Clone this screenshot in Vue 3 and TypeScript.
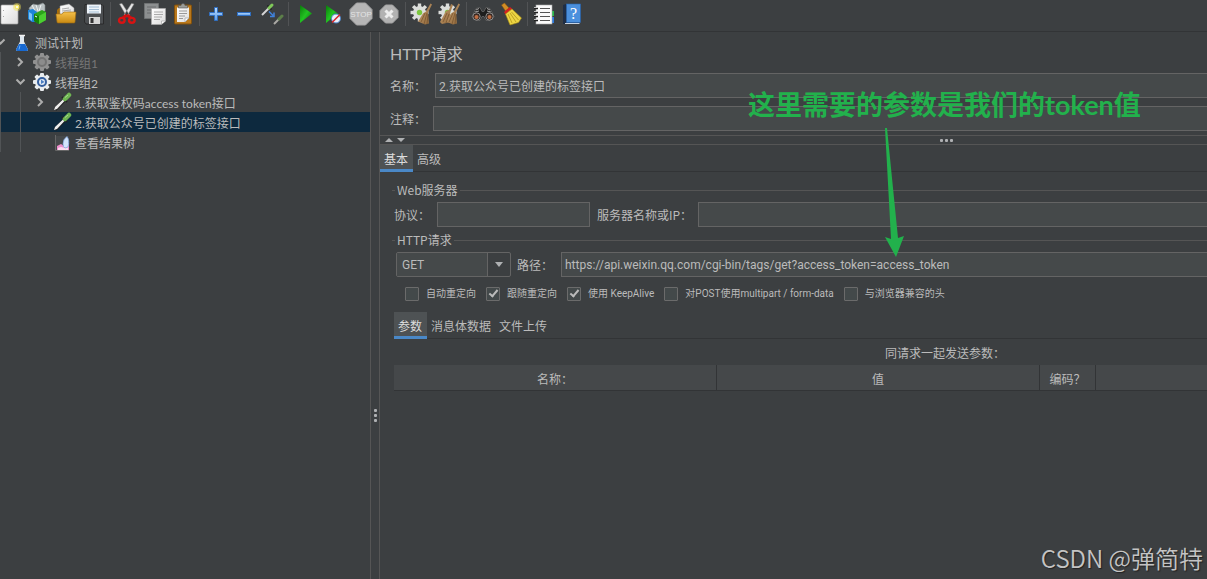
<script setup lang="ts">
import { ref } from 'vue'

type IconKind = 'flask' | 'gear' | 'gear-off' | 'sampler' | 'results'

interface TreeNode {
  id: number
  label: string
  level: number
  icon: IconKind
  expander?: 'open' | 'closed'
  disabled?: boolean
}

const nodes: TreeNode[] = [
  { id: 1, label: '测试计划', level: 0, icon: 'flask', expander: 'open' },
  { id: 2, label: '线程组1', level: 1, icon: 'gear-off', expander: 'closed', disabled: true },
  { id: 3, label: '线程组2', level: 1, icon: 'gear', expander: 'open' },
  { id: 4, label: '1.获取鉴权码access token接口', level: 2, icon: 'sampler', expander: 'closed' },
  { id: 5, label: '2.获取公众号已创建的标签接口', level: 2, icon: 'sampler' },
  { id: 6, label: '查看结果树', level: 2, icon: 'results' },
]

const toolGroups: string[][] = [
  ['new', 'templates', 'open', 'save'],
  ['cut', 'copy', 'paste'],
  ['expand', 'collapse', 'toggle'],
  ['start', 'start-no-pauses', 'stop', 'shutdown'],
  ['clear', 'clear-all'],
  ['search', 'reset-search'],
  ['functions', 'help'],
]

const selectedId = ref(5)
const name = ref('2.获取公众号已创建的标签接口')
const comment = ref('')
const protocol = ref('')
const server = ref('')
const method = ref('GET')
const path = ref('https://api.weixin.qq.com/cgi-bin/tags/get?access_token=access_token')

const mainTabs = ['基本', '高级']
const mainTab = ref('基本')
const bodyTabs = ['参数', '消息体数据', '文件上传']
const bodyTab = ref('参数')

const options = ref([
  { label: '自动重定向', checked: false },
  { label: '跟随重定向', checked: true },
  { label: '使用 KeepAlive', checked: true },
  { label: '对POST使用multipart / form-data', checked: false },
  { label: '与浏览器兼容的头', checked: false },
])

const teeth = [0, 45, 90, 135, 180, 225, 270, 315]
</script>

<template>
  <div class="app">
    <svg class="defs" width="0" height="0" aria-hidden="true">
      <defs>
        <linearGradient id="paper" x1="0" y1="0" x2="1" y2="1">
          <stop offset="0" stop-color="#fff" /><stop offset="1" stop-color="#dcdcdc" />
        </linearGradient>
        <linearGradient id="gold" x1="0" y1="0" x2="0" y2="1">
          <stop offset="0" stop-color="#f5c04a" /><stop offset="1" stop-color="#c98a12" />
        </linearGradient>
        <linearGradient id="leaf" x1="0" y1="0" x2="1" y2="1">
          <stop offset="0" stop-color="#0a7a0a" /><stop offset=".5" stop-color="#22c322" /><stop offset="1" stop-color="#057005" />
        </linearGradient>
        <linearGradient id="straw" x1="0" y1="0" x2="1" y2="1">
          <stop offset="0" stop-color="#c7a071" /><stop offset="1" stop-color="#8d6538" />
        </linearGradient>
        <linearGradient id="sky" x1="0" y1="0" x2="0" y2="1">
          <stop offset="0" stop-color="#bcdcff" /><stop offset="1" stop-color="#5c9ce6" />
        </linearGradient>
      </defs>
    </svg>

    <header class="toolbar" role="toolbar">
      <template v-for="(group, g) in toolGroups" :key="g">
        <span v-if="g > 0" class="tool-sep"></span>
        <button v-for="tool in group" :key="tool" type="button" class="tool" :aria-label="tool">
          <svg viewBox="0 0 24 24" width="24" height="24">
            <g v-if="tool === 'new'">
              <rect x="3" y="3" width="17" height="19" rx="1" fill="url(#paper)" stroke="#a8a8a8" stroke-width=".7" />
              <path d="M5.500 8v1M5.500 14v1" stroke="#aaa" />
              <circle cx="19" cy="5" r="4" fill="#f4e35c" opacity=".45" />
              <circle cx="19" cy="5" r="2.400" fill="#f7ea6b" />
              <circle cx="19" cy="5" r="1" fill="#fff" />
            </g>
            <g v-else-if="tool === 'templates'">
              <path d="M3 6l4-4 5 1 5-2 2 2v6l-8 4-7-3z" fill="#b9c0c2" stroke="#7d8587" stroke-width=".6" />
              <path d="M6 3l3 6M10 3l2 6M15 3l-2 6" stroke="#eef2f2" />
              <path d="M2 8l5-1 4 3v10l-5 0-4-3z" fill="#1d84d8" />
              <path d="M3 10l3 2v7l-3-2z" fill="#7cc4f5" />
              <path d="M8 12l8-4 4 2v8l-7 4-5-3z" fill="#2ca51b" />
              <path d="M8 12l5 2v8l-5-3z" fill="#168008" />
              <path d="M13 14l7-4v8l-7 4z" fill="#4bcf31" />
              <path d="M9 14l2 1" stroke="#fff" />
            </g>
            <g v-else-if="tool === 'open'">
              <path d="M3 8l2-2h5v10H3z" fill="#a56d0c" />
              <path d="M6 4l9-2 5 4v9H6z" fill="url(#paper)" stroke="#999" stroke-width=".5" />
              <path d="M8 7l7-1M8 9l9-1M8 11l9-1" stroke="#999" stroke-width=".8" />
              <path d="M2 12h6l2-2h12l-1 10q0 1-1 1H4q-1 0-1-1z" fill="url(#gold)" stroke="#9c6a10" stroke-width=".6" />
            </g>
            <g v-else-if="tool === 'save'">
              <path d="M3 2.500h17l1.500 1.500v18H4L2.500 20z" fill="#4c4f52" stroke="#252525" stroke-width=".8" />
              <rect x="5" y="2.500" width="14" height="9" fill="#eef4fa" />
              <path d="M7 5h10M7 7.500h10M7 10h10" stroke="#9bb8d0" stroke-width=".9" />
              <rect x="7" y="15" width="11" height="7" fill="#d5d5d5" />
              <rect x="8.500" y="16" width="3" height="5" fill="#333" />
            </g>
            <g v-else-if="tool === 'cut'">
              <path d="M4.500 2l2.500-.5L14.500 13l-2.500 2zM19 2l-2.500-.5L9 13l2.500 2z" fill="#e6e6e6" stroke="#8b8b8b" stroke-width=".5" />
              <path d="M11.500 13L8 16M12 13l4 3" stroke="#d10f0f" stroke-width="3" />
              <ellipse cx="6.800" cy="18.300" rx="2.800" ry="2.400" fill="none" stroke="#d81313" stroke-width="2.400" />
              <ellipse cx="16.800" cy="18.300" rx="2.800" ry="2.400" fill="none" stroke="#d81313" stroke-width="2.400" />
            </g>
            <g v-else-if="tool === 'copy'">
              <path d="M1.500 1.500h14v15h-14z" fill="#8c8f90" stroke="#6f7273" />
              <path d="M4 5h9M4 8h5M4 11h4" stroke="#6a6d6e" />
              <path d="M8.500 6.500h14V19l-4 3.500h-10z" fill="url(#paper)" stroke="#aaa" stroke-width=".7" />
              <path d="M11 10h9M11 12.500h9M11 15h8M11 17.500h6" stroke="#aaa" />
              <path d="M18.500 22v-3h4" fill="#fff" stroke="#999" stroke-width=".6" />
            </g>
            <g v-else-if="tool === 'paste'">
              <rect x="3.500" y="3" width="17" height="19" rx="1" fill="#b9781b" stroke="#81500c" />
              <path d="M6 5.500h12V16l-4 4H6z" fill="url(#paper)" />
              <path d="M8 9h8M8 11.500h8M8 14h6M8 16.500h4" stroke="#999" />
              <path d="M14 20v-4h4z" fill="#fff" stroke="#999" stroke-width=".6" />
              <path d="M7.500 6V3.500h2.500Q10 1.500 12 1.500t2 2h2.500V6z" fill="#9a9c98" stroke="#555" stroke-width=".6" />
            </g>
            <path v-else-if="tool === 'expand'" d="M10.500 5.500h3v5h5v3h-5v5h-3v-5h-5v-3h5z" fill="url(#sky)" stroke="#2f6fc2" />
            <rect v-else-if="tool === 'collapse'" x="5.500" y="10.500" width="13" height="3" fill="url(#sky)" stroke="#2f6fc2" />
            <g v-else-if="tool === 'toggle'">
              <path d="M2 13l7-7" stroke="#d5d5d5" stroke-width="2" />
              <path d="M7.500 3.500l4 4" stroke="#1c1c1c" stroke-width="1.500" />
              <path d="M9 6l3-3" stroke="#7fc75a" stroke-width="3" stroke-linecap="round" />
              <path d="M9 9.500l4 4M14 10.500v4h-4" stroke="#3f82dd" stroke-width="1.500" fill="none" />
              <path d="M14 22l6-6" stroke="#aaa9a4" stroke-width="2" />
              <path d="M19 17l3-3" stroke="#5c7f49" stroke-width="3" stroke-linecap="round" />
            </g>
            <path v-else-if="tool === 'start'" d="M7 3l12 8.500L7 21z" fill="url(#leaf)" />
            <g v-else-if="tool === 'start-no-pauses'">
              <path d="M5 3l12 8.500L5 21z" fill="url(#leaf)" />
              <circle cx="15" cy="16.500" r="4.500" fill="#e9f1fb" stroke="#4a84ca" stroke-width="1" />
              <path d="M11 20.500l8-8" stroke="#d8262c" stroke-width="1.600" />
            </g>
            <g v-else-if="tool === 'stop'">
              <path d="M7.500 1h9L23 7.500v9L16.500 23h-9L1 16.500v-9z" fill="#b5b5b5" stroke="#a3a3a3" />
              <text x="12" y="15" text-anchor="middle" class="stop-text">STOP</text>
            </g>
            <g v-else-if="tool === 'shutdown'">
              <path d="M8.500 3h7L21 8.500v7L15.500 21h-7L3 15.500v-7z" fill="#b2b2b2" stroke="#a3a3a3" />
              <path d="M8.500 8.500l7 7M15.500 8.500l-7 7" stroke="#ededed" stroke-width="3" />
            </g>
            <g v-else-if="tool === 'clear' || tool === 'clear-all'">
              <rect v-for="a in teeth" :key="a" x="7.800" y="1.500" width="3.400" height="5" fill="#dcdedb" :transform="`rotate(${a} 9.500 10.500)`" />
              <circle cx="9.500" cy="10.500" r="6.500" fill="#dcdedb" />
              <circle cx="9.500" cy="10.500" r="2.700" fill="#7cc83e" />
              <path v-if="tool === 'clear-all'" d="M13 2l2 1-3 8 1 9-9 2-2-2 6-11 3-1z" fill="url(#straw)" />
              <path d="M20.500 1.500l1.500 1-4 8 1 11-4 1-7-3 5-8 3-2z" fill="url(#straw)" />
              <path d="M15 11l-4 9M17 11l-3 11M18 12l-1 10" stroke="#73502b" stroke-width=".7" />
              <path v-if="tool === 'clear-all'" d="M9 11l-4 9M11 12l-3 9" stroke="#73502b" stroke-width=".7" />
            </g>
            <g v-else-if="tool === 'search'">
              <path d="M5 6.500l4-1 2 4h2l2-4 4 1 4 8-4 4h-4l-2-4h-2l-2 4H5l-4-4z" fill="#1d1d1d" stroke="#6d6d6d" stroke-width=".7" />
              <path d="M5 8l3-1.500M16 6.500l3 1.500M4 10l4-1M16 9l4 1" stroke="#a5a5a5" />
              <circle cx="5.500" cy="14.500" r="3.700" fill="#3a2a24" stroke="#8c8c8c" />
              <circle cx="18.500" cy="14.500" r="3.700" fill="#3a2a24" stroke="#8c8c8c" />
              <circle cx="5.500" cy="15" r="2" fill="#c06f45" />
              <circle cx="18.500" cy="15" r="2" fill="#c06f45" />
            </g>
            <g v-else-if="tool === 'reset-search'">
              <path d="M2.500 3l3-2 4.500 5-3.500 3z" fill="#d28d25" stroke="#8f5a10" stroke-width=".5" />
              <path d="M5 10l6-5 2.500 2-7 5.500z" fill="#d32020" />
              <path d="M6.500 12l6.500-5 9.500 9-3 4.500L11 23z" fill="#ecd544" stroke="#a98d13" stroke-width=".6" />
              <path d="M9 12l4 9M11 11l6 9M12.500 10l7 8" stroke="#a98d13" stroke-width=".7" />
            </g>
            <g v-else-if="tool === 'functions'">
              <rect x="18" y="9" width="4" height="5" fill="#28b84a" />
              <rect x="18" y="15" width="4" height="6" fill="#2c7be0" />
              <rect x="4" y="3" width="16" height="19" fill="#fbfbfb" stroke="#aaa" stroke-width=".6" />
              <path d="M8 6.500h10M8 10.500h10M8 14.500h10M8 18.500h10" stroke="#555" />
              <path d="M2 6.500h4M2 10.500h4M2 14.500h4M2 18.500h4" stroke="#222" stroke-width="1.600" />
              <path d="M2 5.500h3M2 9.500h3M2 13.500h3M2 17.500h3" stroke="#ddd" stroke-width=".8" />
            </g>
            <g v-else>
              <path d="M3 3l3-1h14.500v18L19 22H3z" fill="#1e2d45" />
              <rect x="6.500" y="2" width="14" height="18.500" fill="#4b90dd" stroke="#2a66b0" stroke-width=".6" />
              <path d="M5 21.500h14.500" stroke="#c8d4e2" />
              <text x="13.500" y="17" text-anchor="middle" class="help-text">?</text>
            </g>
          </svg>
        </button>
      </template>
    </header>

    <div class="workspace">
      <nav class="tree" role="tree">
        <div
          v-for="node in nodes"
          :key="node.id"
          class="node"
          :class="{ selected: node.id === selectedId, disabled: node.disabled }"
          role="treeitem"
          :aria-selected="node.id === selectedId"
          @click="selectedId = node.id"
        >
          <span v-for="n in node.level" :key="n" class="guide" :style="{ left: `${n * 20 - 20}px` }"></span>
          <span class="node-body" :style="{ paddingLeft: `${node.level * 20}px` }">
            <svg class="expander" viewBox="0 0 18 18" width="18" height="18">
              <path v-if="node.expander === 'open'" d="M4.500 6.500l4 4 4-4" />
              <path v-else-if="node.expander === 'closed'" d="M6 5l4 4-4 4" />
            </svg>
            <svg class="node-icon" viewBox="0 0 22 20" width="22" height="20">
              <g v-if="node.icon === 'flask'">
                <path d="M9 3.500h4v6l4 8q0 1.500-1.500 1.500h-9Q5 19 5 17.500l4-8z" fill="#dfe8f0" />
                <path d="M8 12h6l3 5.500q0 1.500-1.500 1.500h-9Q5 19 5 17.500z" fill="#1769d2" />
                <path d="M8 3.500h6" stroke="#f2f2f2" stroke-width="1.500" />
                <path d="M8 17.500l1-4" stroke="#6bb0f8" />
              </g>
              <g v-else-if="node.icon === 'gear' || node.icon === 'gear-off'">
                <g :fill="node.icon === 'gear' ? '#e9ecee' : '#919191'">
                  <rect v-for="a in teeth" :key="a" x="9" y="1" width="4" height="5" rx="1" :transform="`rotate(${a} 11 10)`" />
                  <circle cx="11" cy="10" r="7" />
                </g>
                <circle cx="11" cy="10" r="4" :fill="node.icon === 'gear' ? '#dfe9f5' : '#8c8c8c'" :stroke="node.icon === 'gear' ? '#355f9e' : '#737373'" stroke-width="2" />
                <path v-if="node.icon === 'gear'" d="M10 7.500l3.500 2.500-3.500 2z" fill="#4b7fc4" />
              </g>
              <g v-else-if="node.icon === 'sampler'">
                <path d="M4 17.500l9-9" stroke="#1d1d1d" stroke-width="3.600" />
                <path d="M3 18l1-3 8.500-8 1.500 1.500-8 8.500z" fill="#ededed" />
                <path d="M11 5l5 5" stroke="#222" stroke-width="2" />
                <path d="M14 7l4-4" stroke="#6fb553" stroke-width="4.500" stroke-linecap="round" />
                <path d="M14 5.500l3-2.500" stroke="#a6dc8c" />
              </g>
              <g v-else>
                <rect x="5" y="4" width="13" height="14" fill="#45484a" />
                <path d="M6 18v-4l4-2 3 2 5-3v7z" fill="#f08fcd" />
                <path d="M7 18v-2l3-1 4 1 3-1v3z" fill="#fadcf0" />
                <path d="M12 12q0-5 4-7.500 3 4 1 10.500l-3 1q-2-1-2-4z" fill="#d3e4fb" stroke="#7ba4e0" stroke-width=".7" />
                <path d="M4.500 3v15.500H18" fill="none" stroke="#666" />
              </g>
            </svg>
            <span class="node-label">{{ node.label }}</span>
          </span>
        </div>
      </nav>

      <div class="splitter" role="separator"><i></i><i></i><i></i></div>

      <main class="editor">
        <h1>HTTP请求</h1>
        <div class="row name-row">
          <label for="name">名称：</label>
          <input id="name" v-model="name" type="text" />
        </div>
        <div class="row comment-row">
          <label for="comment">注释：</label>
          <input id="comment" v-model="comment" type="text" />
        </div>

        <div class="divider" role="separator">
          <svg viewBox="0 0 20 8" width="20" height="8"><path d="M0 6l4-4 4 4zM12 2h8l-4 4z" fill="#afb1b3" /></svg>
          <span class="dots"><i></i><i></i><i></i></span>
        </div>

        <div class="tabs" role="tablist">
          <button v-for="tab in mainTabs" :key="tab" type="button" role="tab" :aria-selected="tab === mainTab" @click="mainTab = tab">{{ tab }}</button>
        </div>

        <div class="pane">
          <fieldset>
            <legend>Web服务器</legend>
            <div class="row server-row">
              <label for="protocol">协议：</label>
              <input id="protocol" v-model="protocol" class="protocol" type="text" />
              <label for="server" class="server-label">服务器名称或IP：</label>
              <input id="server" v-model="server" type="text" />
            </div>
          </fieldset>

          <fieldset>
            <legend>HTTP请求</legend>
            <div class="row path-row">
              <div class="combo">
                <select v-model="method" aria-label="HTTP请求">
                  <option>GET</option>
                  <option>POST</option>
                  <option>PUT</option>
                  <option>DELETE</option>
                </select>
                <span class="combo-arrow"><svg viewBox="0 0 8 5" width="8" height="5"><path d="M0 0h8L4 5z" fill="#afb1b3" /></svg></span>
              </div>
              <label for="path">路径：</label>
              <input id="path" v-model="path" type="text" />
            </div>
            <div class="options">
              <label v-for="opt in options" :key="opt.label"><input v-model="opt.checked" type="checkbox" />{{ opt.label }}</label>
            </div>
          </fieldset>

          <div class="params">
            <div class="tabs" role="tablist">
              <button v-for="tab in bodyTabs" :key="tab" type="button" role="tab" :aria-selected="tab === bodyTab" @click="bodyTab = tab">{{ tab }}</button>
            </div>
            <table>
              <caption>同请求一起发送参数：</caption>
              <colgroup><col class="wide" /><col class="wide" /><col class="narrow" /><col /></colgroup>
              <thead>
                <tr><th>名称：</th><th>值</th><th>编码？</th><th></th></tr>
              </thead>
            </table>
          </div>
        </div>
      </main>
    </div>

    <div class="note">
      <p>这里需要的参数是我们的token值</p>
      <svg viewBox="0 0 20 130" width="20" height="130"><path d="M1 0h2l11 110 6-2-8 21L1 109l6 2z" fill="#22b14c" /></svg>
    </div>
    <div class="watermark">CSDN @弹简特</div>
  </div>
</template>

<style>
html,
body {
  background: #3c3f41;
  overflow: hidden;
}
</style>

<style scoped>
.app {
  position: relative;
  height: 100vh;
  overflow: hidden;
  background: #3c3f41;
  color: #bbb;
  font: 12px/16px 'Noto Sans CJK SC', sans-serif;
}
.defs {
  position: absolute;
}
button,
input,
select {
  box-sizing: border-box;
  margin: 0;
  font: inherit;
  color: inherit;
}
h1,
.node-label,
.note {
  font-family: Lato, 'Noto Sans CJK SC', sans-serif;
}
.row input,
.combo select,
.options {
  font-family: Roboto, 'Noto Sans CJK SC', sans-serif;
}
.toolbar {
  display: flex;
  height: 31px;
  margin-left: -4px;
  border-bottom: 1px solid #323436;
}
.tool {
  flex: none;
  width: 28px;
  height: 28px;
  padding: 2px;
  border: 0;
  background: none;
}
.tool svg {
  display: block;
}
.tool-sep {
  flex: none;
  width: 1px;
  height: 24px;
  margin: 2px 2px 0;
  background: #515355;
}
.stop-text {
  font: 8px 'Liberation Sans', sans-serif;
  fill: #e4e4e4;
}
.help-text {
  font: 16px 'Liberation Serif', serif;
  fill: #fff;
}
.workspace {
  display: flex;
  min-height: 767px;
}
.tree {
  flex: none;
  width: 370px;
  overflow: hidden;
}
.node {
  position: relative;
  height: 20px;
}
.node.selected {
  background: #0d293e;
}
.node.disabled {
  color: #777;
}
.guide {
  position: absolute;
  top: 0;
  bottom: 0;
  width: 1px;
  background: #515456;
}
.node-body {
  display: flex;
  align-items: center;
  height: 20px;
  margin-left: -8px;
}
.expander {
  flex: none;
  fill: none;
  stroke: #adadad;
  stroke-width: 2;
}
.node-icon {
  flex: none;
  margin: 0 2px 0 1px;
}
.node-label {
  padding-top: 4px;
  white-space: nowrap;
}
.splitter {
  flex: none;
  box-sizing: border-box;
  display: flex;
  flex-direction: column;
  align-items: center;
  justify-content: center;
  gap: 2px;
  width: 10px;
  border: solid #555;
  border-width: 0 1px;
}
.splitter i,
.dots i {
  width: 3px;
  height: 3px;
  border-radius: 1px;
  background: #afb1b3;
}
.editor {
  flex: 1 0 1133px;
  min-width: 0;
}
h1 {
  margin: 10px 10px 7px;
  font-size: 16px;
  font-weight: 400;
  line-height: 24px;
}
.row {
  display: flex;
  align-items: center;
}
.row label {
  flex: none;
}
.row input {
  flex: 1;
  min-width: 0;
  height: 25px;
  padding: 0 3px;
  border: 1px solid #646464;
  background: #45494a;
  outline: 0;
}
.name-row,
.comment-row {
  padding-left: 10px;
}
.name-row label {
  width: 45px;
}
.comment-row {
  margin: 8px 0 4px;
}
.comment-row label {
  width: 43px;
}
.divider {
  display: flex;
  align-items: center;
  height: 8px;
  padding-left: 5px;
  border: solid #555;
  border-width: 1px 0;
}
.dots {
  display: flex;
  flex: 1;
  justify-content: center;
  gap: 2px;
  padding-right: 25px;
}
.tabs {
  display: flex;
  height: 27px;
  box-shadow: inset 0 -1px #323436;
}
.tabs button {
  height: 27px;
  padding: 3px 4px 0;
  border: 0;
  border-bottom: 3px solid transparent;
  background: none;
}
.tabs button[aria-selected='true'] {
  padding-right: 5px;
  border-bottom-color: #4a88c7;
  background: #4e5254;
  color: #ddd;
}
.pane {
  padding: 10px 0 0 12px;
}
fieldset {
  min-width: 0;
  margin: 0 0 5px;
  padding: 4px 0 0;
  border: 0;
  border-top: 1px solid #555;
}
legend {
  margin-left: 3px;
  padding: 0 2px;
}
.server-row label {
  width: 43px;
  padding-left: 2px;
}
.row .protocol {
  flex: none;
  width: 153px;
}
.server-row .server-label {
  width: 101px;
  padding-left: 7px;
}
.combo {
  box-sizing: border-box;
  display: flex;
  width: 115px;
  height: 25px;
  margin: 0 6px 0 4px;
  border: 1px solid #646464;
  border-radius: 2px;
}
.combo select {
  flex: 1;
  padding: 0 5px;
  border: 0;
  background: #45494a;
  appearance: none;
  outline: 0;
}
.combo-arrow {
  display: grid;
  place-items: center;
  width: 22px;
  border-left: 1px solid #646464;
}
.path-row label {
  width: 44px;
}
.options {
  display: flex;
  gap: 10px;
  padding: 9px 0 0 13px;
  font-size: 10px;
}
.options label {
  display: flex;
  align-items: center;
  height: 16px;
  white-space: nowrap;
}
.options input {
  position: relative;
  width: 14px;
  height: 14px;
  margin-right: 7px;
  border: 1px solid #6b6b6b;
  border-radius: 1px;
  background: #43494a;
  appearance: none;
}
.options input:checked::after {
  content: '';
  position: absolute;
  left: 4px;
  top: 0;
  width: 3px;
  height: 7px;
  border: solid #bbb;
  border-width: 0 2px 2px 0;
  transform: rotate(40deg);
}
.params {
  padding: 5px 17px 0 2px;
}
table {
  width: 100%;
  border-collapse: separate;
  border-spacing: 0;
  table-layout: fixed;
}
caption {
  height: 26px;
  line-height: 28px;
}
.wide {
  width: 323px;
}
.narrow {
  width: 56px;
}
th {
  height: 26px;
  padding: 2px 0 0;
  box-sizing: border-box;
  border-right: 1px solid #323436;
  border-bottom: 1px solid #323436;
  background: #45484a;
  font-weight: 400;
}
.note {
  position: absolute;
  left: 748px;
  top: 88px;
  color: #22b14c;
  font-size: 27px;
  font-weight: 700;
  line-height: 34px;
  white-space: nowrap;
  pointer-events: none;
}
.note p {
  margin: 0;
}
.note svg {
  display: block;
  margin: 6px 0 0 136px;
}
.watermark {
  position: absolute;
  right: 4px;
  bottom: 3px;
  color: #c4c4c4;
  font: 350 24px/36px 'Noto Sans CJK SC', sans-serif;
  text-shadow: 1px 1px 1px #222;
}
</style>
